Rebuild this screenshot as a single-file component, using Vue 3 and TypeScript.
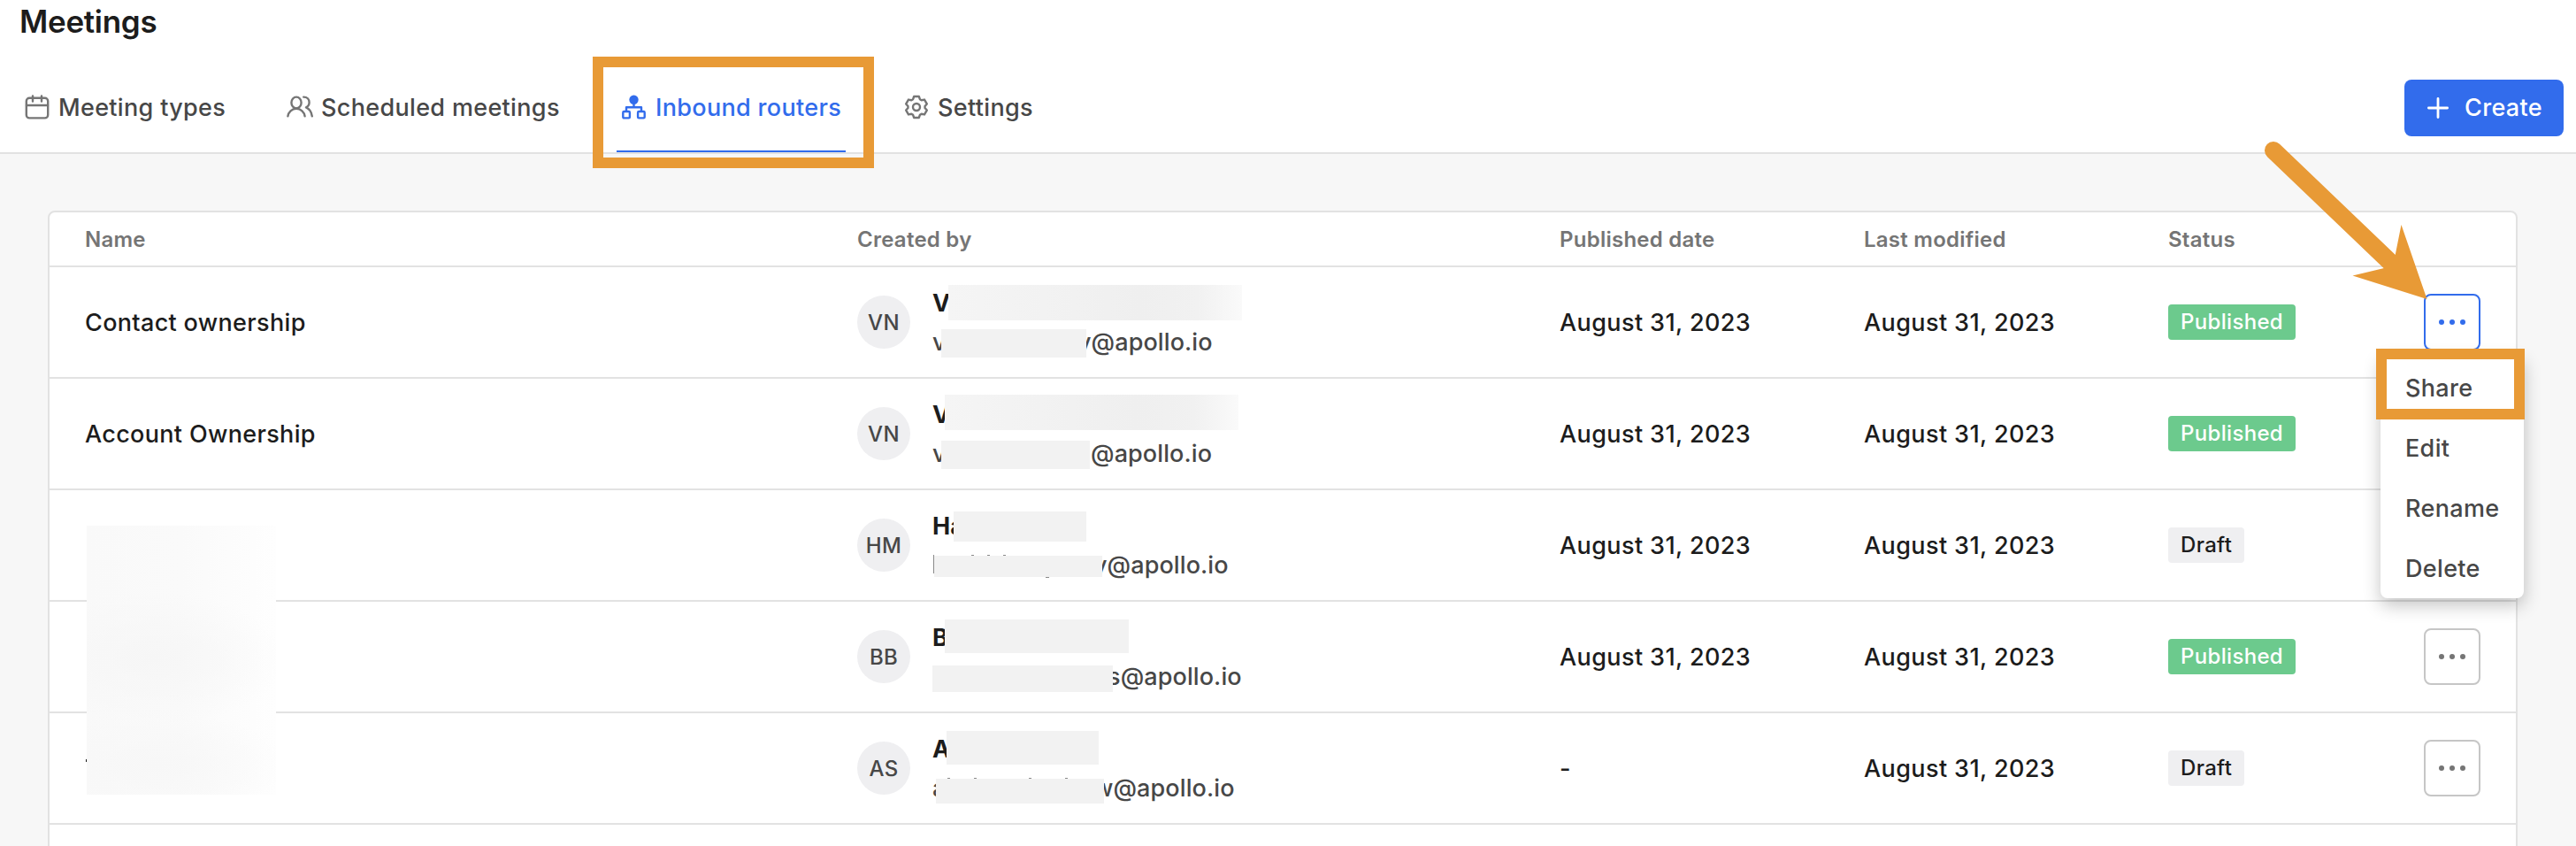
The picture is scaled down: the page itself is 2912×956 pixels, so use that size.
<script setup lang="ts">
interface Mask { x: number; y: number; w: number; h: number }
interface Row {
  name: string
  initials: string
  person: string
  local: string
  tail: string
  published: string
  status: 'Published' | 'Draft'
  masks: Mask[]
  specks: Mask[]
  tailX: number
}

// Mask, speck and tail offsets are relative to the contact block of each row.
const rows: Row[] = [
  { name: 'Contact ownership', initials: 'VN', person: 'V', local: 'v', tail: 'v@apollo.io', tailX: 164, published: 'August 31, 2023', status: 'Published', masks: [{ x: 18, y: 20, w: 332, h: 40 }, { x: 10, y: 70, w: 164, h: 32 }], specks: [] },
  { name: 'Account Ownership', initials: 'VN', person: 'V', local: 'v', tail: '@apollo.io', tailX: 179, published: 'August 31, 2023', status: 'Published', masks: [{ x: 14, y: 18, w: 332, h: 40 }, { x: 10, y: 70, w: 168, h: 32 }], specks: [] },
  { name: '', initials: 'HM', person: 'Ha', local: '', tail: 'v@apollo.io', tailX: 182, published: 'August 31, 2023', status: 'Draft', masks: [{ x: 24, y: 24, w: 150, h: 34 }, { x: 2, y: 74, w: 190, h: 24 }], specks: [{ x: 1, y: 73, w: 1, h: 21 }, { x: 44, y: 73, w: 3, h: 1 }, { x: 62, y: 73, w: 3, h: 1 }, { x: 80, y: 73, w: 3, h: 1 }, { x: 128, y: 98, w: 4, h: 1 }] },
  { name: '', initials: 'BB', person: 'B', local: '', tail: 's@apollo.io', tailX: 198, published: 'August 31, 2023', status: 'Published', masks: [{ x: 14, y: 20, w: 208, h: 38 }, { x: 0, y: 72, w: 204, h: 30 }], specks: [] },
  { name: '', initials: 'AS', person: 'A', local: 'a', tail: 'w@apollo.io', tailX: 182, published: '-', status: 'Draft', masks: [{ x: 16, y: 20, w: 172, h: 38 }, { x: 4, y: 74, w: 190, h: 28 }], specks: [{ x: 17, y: 73, w: 3, h: 1 }, { x: 47, y: 73, w: 3, h: 1 }, { x: 109, y: 73, w: 3, h: 1 }, { x: 150, y: 73, w: 3, h: 1 }] },
]
const boxStyle = (m: Mask) => ({ left: m.x + 'px', top: m.y + 'px', width: m.w + 'px', height: m.h + 'px' })
const menu = ['Share', 'Edit', 'Rename', 'Delete']
</script>

<template>
  <div class="page">
    <header class="top">
      <h1>Meetings</h1>
      <div class="bar">
        <nav class="tabs">
          <a class="tab types">
            <svg width="28" height="30" viewBox="0 0 28 30" fill="none" stroke="currentColor" stroke-width="2.4" stroke-linecap="round"><rect x="1.8" y="4.8" width="24.4" height="22.6" rx="3.4" /><path d="M2 13h24M9 2.500v6M19 2.500v6" /></svg>
            <span>Meeting types</span>
          </a>
          <a class="tab scheduled">
            <svg width="30" height="26" viewBox="0 0 30 26" fill="none" stroke="currentColor" stroke-width="2.4" stroke-linecap="round" stroke-linejoin="round"><ellipse cx="11" cy="8" rx="5.600" ry="6.400" /><path d="M1.400 23.400C2 18.600 6 14.800 11 14.800S20 18.600 20.600 23.400M19.200 1.600c4 0 6.400 2.800 6.400 6.200 0 2.600-1.400 4.600-3.600 5.600 3.800 1.600 6.200 5.600 6.800 10" /></svg>
            <span>Scheduled meetings</span>
          </a>
          <a class="tab inbound active">
            <svg width="27" height="30" viewBox="0 0 27 30" fill="none" stroke="currentColor" stroke-width="2.4" stroke-linejoin="round"><circle cx="13.500" cy="6.800" r="5.200" fill="currentColor" stroke="none" /><path d="M13.500 10v5.500M5 20v-4.800h17V20" /><rect x="1.300" y="20" width="7.600" height="7.400" rx="1.200" /><rect x="18.100" y="20" width="7.600" height="7.400" rx="1.200" /></svg>
            <span>Inbound routers</span>
          </a>
          <a class="tab settings">
            <svg width="28" height="30" viewBox="0 0 28 30" fill="none" stroke="currentColor" stroke-width="2.400" stroke-linejoin="round"><path d="M11.200 3h5.600L17.900 6.200l1.770 1.020 3.320-.64 2.800 4.840-2.220 2.560v2.040l2.220 2.560-2.800 4.840-3.320-.64-1.770 1.020L16.800 27h-5.600l-1.100-3.200-1.770-1.020-3.320.64-2.800-4.840 2.220-2.560v-2.040L2.210 11.420l2.800-4.840 3.320.64L10.100 6.200z" /><circle cx="14" cy="15" r="4" /></svg>
            <span>Settings</span>
          </a>
        </nav>
        <button class="create">
          <svg width="24" height="24" viewBox="0 0 24 24" stroke="#fff" stroke-width="2.800" stroke-linecap="round"><path d="M12 1.400v21.200M1.400 12h21.200" /></svg>
          <span>Create</span>
        </button>
      </div>
    </header>

    <main class="card">
      <div class="row head">
        <span>Name</span><span>Created by</span><span>Published date</span><span>Last modified</span><span>Status</span><span></span>
      </div>
      <div v-for="(r, i) in rows" :key="i" class="row item">
        <span class="name">{{ r.name }}</span>
        <div class="by">
          <span class="avatar">{{ r.initials }}</span>
          <div class="contact">
            <b>{{ r.person }}</b>
            <span class="local">{{ r.local }}</span>
            <span class="tail" :style="{ left: r.tailX + 'px' }">{{ r.tail }}</span>
            <i v-for="(m, k) in r.masks" :key="k" class="mask" :class="{ wide: m.w > 300 }" :style="boxStyle(m)"></i>
            <i v-for="(s, k) in r.specks" :key="'s' + k" class="dot" :style="boxStyle(s)"></i>
          </div>
        </div>
        <span class="date">{{ r.published }}</span>
        <span class="date">August 31, 2023</span>
        <span class="status"><em class="badge" :class="r.status.toLowerCase()">{{ r.status }}</em></span>
        <button class="more" :class="{ on: i === 0 }"><i></i><i></i><i></i></button>
      </div>
      <div class="namemask"></div>
      <i class="speck"></i>
    </main>

    <div class="menu">
      <span v-for="m in menu" :key="m">{{ m }}</span>
    </div>
    <svg class="arrow" width="200" height="190" viewBox="0 0 200 190"><path d="M20 20L158 152" stroke="#e89a36" stroke-width="20" stroke-linecap="round" /><path d="M193.500 188L164.500 104l-7 35L145 153l-35.500 8.500z" fill="#e89a36" /></svg>
    <div class="frame frame-tab"></div>
    <div class="frame frame-share"></div>
  </div>
</template>

<style>
body { margin: 0; }
</style>

<style scoped>
.page { position: relative; width: 2912px; height: 956px; overflow: hidden; background: #f7f7f7; color: #1c1c1c; font-family: Inter, "Liberation Sans", sans-serif; font-size: 27px; font-weight: 500; line-height: 40px; letter-spacing: 0.33px; }
.page * { box-sizing: border-box; }
.page span, .page b, .page em { white-space: nowrap; }
button { font: inherit; letter-spacing: inherit; padding: 0; }
.top { height: 174px; background: #fff; border-bottom: 2px solid #e2e2e2; }
h1 { margin: 0; padding: 4px 0 0 22px; height: 80px; font-size: 35px; line-height: 40px; font-weight: 600; letter-spacing: -0.3px; }
.bar { display: flex; justify-content: space-between; height: 92px; padding-right: 14px; }
.tabs { display: flex; color: #474747; }
.tab { display: flex; align-items: center; height: 92px; padding-bottom: 10px; }
.tab span { padding-top: 2px; }
.tab svg { color: #757575; flex: none; }
.types { margin-left: 28px; width: 296px; gap: 10px; }
.scheduled { width: 373px; gap: 9px; }
.inbound { width: 259px; padding-left: 6px; gap: 11px; }
.active { color: #326cec; border-bottom: 2px solid #326cec; padding-bottom: 8px; }
.active svg { color: #326cec; }
.settings { margin-left: 66px; gap: 10px; }
.create { display: flex; align-items: center; gap: 18px; width: 180px; height: 64px; margin-top: 10px; padding-left: 26px; border: 0; border-radius: 8px; background: #326cec; color: #fff; }
.card { position: relative; width: 2792px; height: 740px; margin: 64px 0 0 54px; border: 2px solid #e2e2e2; border-radius: 8px; background: #fff; }
.row { display: grid; grid-template-columns: 873px 794px 344px 344px 289px 64px; align-items: center; padding-left: 40px; border-bottom: 2px solid #e2e2e2; }
.head { height: 62px; padding-top: 2px; font-size: 24px; font-weight: 600; letter-spacing: 0.25px; color: #757575; }
.item { height: 126px; }
.name, .date { padding-top: 2px; }
.date { letter-spacing: 0.4px; }
.by { display: flex; align-items: center; gap: 25px; height: 124px; }
.avatar { width: 60px; height: 60px; border-radius: 50%; background: #efeff1; color: #474747; font-size: 24px; line-height: 62px; text-align: center; }
.contact { position: relative; align-self: stretch; width: 420px; padding-top: 21px; color: #474747; letter-spacing: 0; }
.contact b { display: block; height: 44px; color: #1c1c1c; font-weight: 700; }
.local { display: block; }
.tail { position: absolute; top: 65px; letter-spacing: 0.1px; }
.mask { position: absolute; background: #f2f2f2; }
.wide { background: linear-gradient(90deg, #f5f5f5, #efefef 65%, #f1f1f1 85%, #fafafa); }
.dot { position: absolute; background: #8a8a8a; }
.status { display: flex; }
.badge { height: 40px; padding: 0 14px; border-radius: 4px; font-size: 24px; font-style: normal; }
.published { background: #6cca8d; color: #fff; }
.draft { background: #efeff1; }
.more { display: flex; align-items: center; justify-content: center; gap: 6px; width: 64px; height: 64px; border: 2px solid #c6c6c6; border-radius: 8px; background: #fff; color: #757575; }
.more i { width: 6px; height: 6px; border-radius: 50%; background: currentColor; }
.on { border-color: #326cec; color: #326cec; }
.namemask { position: absolute; left: 42px; top: 354px; width: 214px; height: 304px; background: radial-gradient(ellipse 150px 75px at 75px 150px, #f6f6f6, rgba(247,247,247,0)), radial-gradient(ellipse 150px 60px at 80px 270px, #f7f7f7, rgba(247,247,247,0)), linear-gradient(90deg, #f9f9f9, #fafafa 50%, #fefefe); }
.speck { position: absolute; left: 41px; top: 618px; width: 1px; height: 3px; background: #1c1c1c; }
.menu { position: absolute; left: 2691px; top: 400px; width: 162px; height: 276px; padding: 5px 0 0 28px; border-radius: 8px; background: #fff; color: #474747; box-shadow: 0 8px 20px rgba(0,0,0,.24); display: flex; flex-direction: column; }
.menu span { height: 68px; line-height: 68px; }
.frame { position: absolute; border: 12px solid #e89a36; }
.frame-tab { left: 670px; top: 64px; width: 318px; height: 126px; }
.frame-share { left: 2686px; top: 394px; width: 168px; height: 80px; }
.arrow { position: absolute; left: 2550px; top: 150px; }
</style>
